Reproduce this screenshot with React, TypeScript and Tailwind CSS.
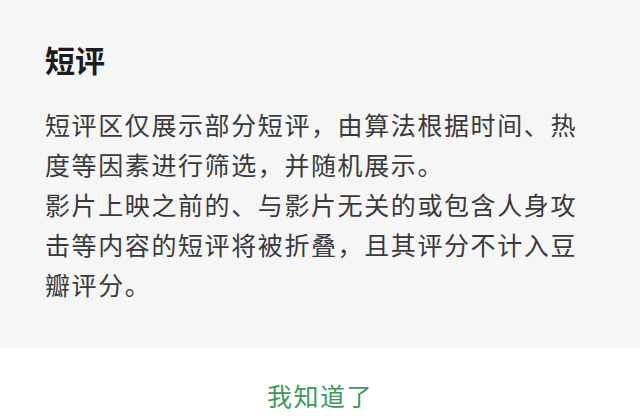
export default function App() {
  return (
    <div
      className="w-[640px] h-[416px] overflow-hidden bg-white"
      style={{ fontFamily: '"Noto Sans CJK SC", "Noto Sans", sans-serif' }}
    >
      {/* 说明面板 */}
      <div className="bg-[#f6f6f6] px-[45px] pt-[39px] pb-[44px]">
        <h2 className="text-[30px] leading-[40px] font-bold text-[#1c1c1c]">短评</h2>
        <div className="mt-[25px] text-[25px] leading-[40px] tracking-[1.6px] text-[#3a3a3a]">
          <p>短评区仅展示部分短评，由算法根据时间、热度等因素进行筛选，并随机展示。</p>
          <p>影片上映之前的、与影片无关的或包含人身攻击等内容的短评将被折叠，且其评分不计入豆瓣评分。</p>
        </div>
      </div>
      {/* 确认按钮 */}
      <div className="flex justify-center pt-[27px]">
        <button className="text-[25px] leading-[40px] tracking-[1.5px] text-[#3b9a5a]">我知道了</button>
      </div>
    </div>
  );
}
